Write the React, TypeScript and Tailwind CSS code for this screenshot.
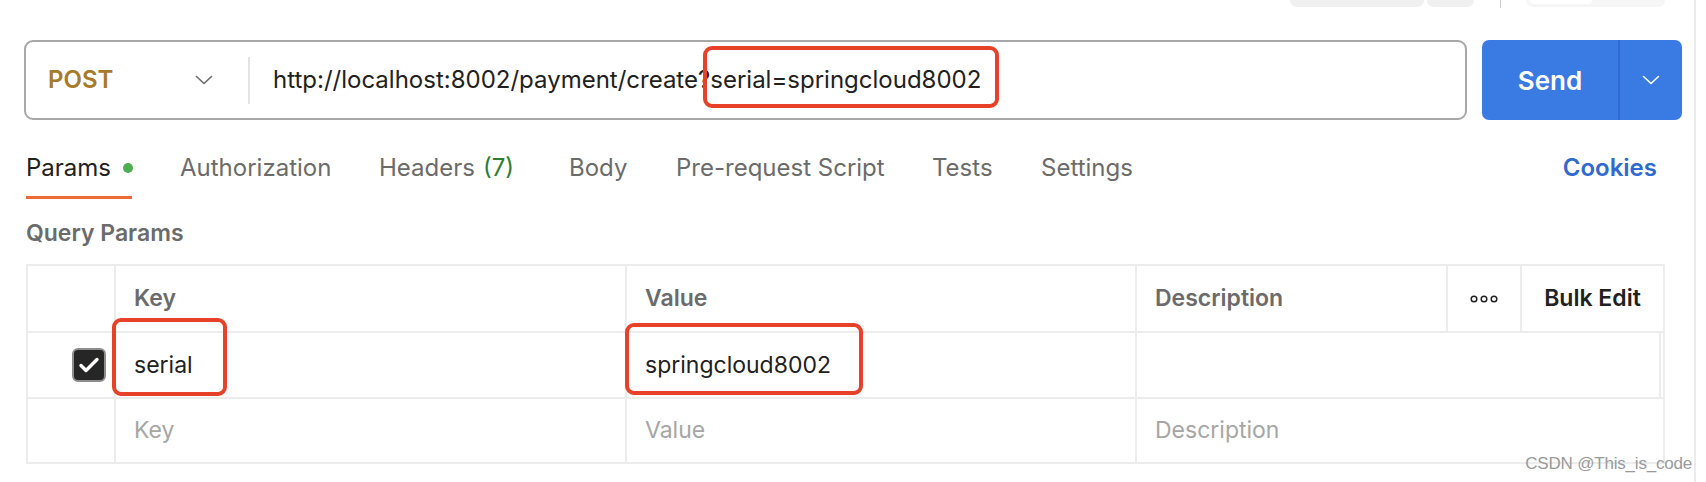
import { ReactNode } from "react";

function Chevron({ className }: { className?: string }) {
  return (
    <svg width="18" height="10" viewBox="0 0 18 10" className={className} fill="none">
      <polyline points="1.5,1.5 9,8.5 16.5,1.5" stroke="currentColor" strokeWidth="1.6" strokeLinecap="round" strokeLinejoin="round" />
    </svg>
  );
}

function Tab({ w, active, children }: { w: string; active?: boolean; children: ReactNode }) {
  return (
    <div className={`flex h-full shrink-0 flex-col ${w}`}>
      <div className={`mt-[33px] flex h-[30px] items-center text-[24px] leading-[30px] ${active ? "text-[#212121]" : "text-[#6b6b6b]"}`}>
        {children}
      </div>
      <div className="flex-1" />
      {active && <div className="h-[3px] w-[106px] bg-[#f0693b]" />}
    </div>
  );
}

function Check() {
  return (
    <div className="flex h-[34px] w-[34px] items-center justify-center rounded-[6px] border-2 border-[#8d8d8d] bg-[#262626]">
      <svg width="22" height="18" viewBox="0 0 22 18" fill="none">
        <polyline points="3,9.5 8,14.5 19,3.5" stroke="#fff" strokeWidth="3.4" strokeLinecap="round" strokeLinejoin="round" />
      </svg>
    </div>
  );
}

function Dots() {
  return (
    <svg width="28" height="8" viewBox="0 0 28 8" fill="none">
      <circle cx="4" cy="4" r="2.8" stroke="#212121" strokeWidth="1.5" />
      <circle cx="14" cy="4" r="2.8" stroke="#212121" strokeWidth="1.5" />
      <circle cx="24" cy="4" r="2.8" stroke="#212121" strokeWidth="1.5" />
    </svg>
  );
}

const cols = "grid grid-cols-[88px_511px_510px_311px_74px_141px]";

export default function App() {
  return (
    <div className="relative flex h-[482px] w-[1706px] overflow-hidden bg-white font-['Inter',sans-serif]">
      <div className="flex w-[1694px] flex-col pl-[24px]">
        {/* clipped toolbar above */}
        <div className="flex h-[7px] items-start pl-[1266px]">
          <div className="h-[7px] w-[134px] rounded-b-[8px] bg-[#f0f0f0]" />
          <div className="ml-[3px] h-[7px] w-[47px] rounded-b-[8px] bg-[#f0f0f0]" />
          <div className="ml-[26px] h-[8px] w-px bg-[#cfcfcf]" />
          <div className="ml-[25px] h-[7px] w-[139px] rounded-b-[8px] bg-[#f6f6f6] pl-[4px]">
            <div className="h-[4px] w-[62px] rounded-b-[6px] bg-white" />
          </div>
        </div>

        {/* request bar */}
        <div className="mt-[33px] flex h-[80px] items-stretch">
          <div className="flex w-[1443px] items-center rounded-[9px] border-2 border-[#a8a8a8]">
            <div className="flex w-[222px] items-center pl-[22px]">
              <span className="text-[24px] font-semibold text-[#a77a2c]">POST</span>
              <Chevron className="ml-[82px] text-[#6b6b6b]" />
            </div>
            <div className="h-[47px] w-[2px] bg-[#e3e3e3]" />
            <div className="pl-[23px] text-[24px] text-[#212121]">
              http://localhost:8002/payment/create?serial=springcloud8002
            </div>
          </div>
          <div className="ml-[15px] flex w-[200px] overflow-hidden rounded-[7px] bg-[#3a7be3]">
            <div className="flex w-[136px] items-center justify-center text-[26px] font-semibold text-white">Send</div>
            <div className="w-[2px] bg-[#2f6bd0]" />
            <div className="flex flex-1 items-center justify-center text-white">
              <Chevron />
            </div>
          </div>
        </div>

        {/* tabs */}
        <div className="ml-[2px] flex h-[79px] items-stretch">
          <Tab w="w-[154px]" active>
            Params
            <span className="ml-[12px] inline-block h-[10px] w-[10px] rounded-full bg-[#4caf50]" />
          </Tab>
          <Tab w="w-[199px]">Authorization</Tab>
          <Tab w="w-[190px]">
            Headers<span className="ml-[8px] text-[#2e7d32]">(7)</span>
          </Tab>
          <Tab w="w-[107px]">Body</Tab>
          <Tab w="w-[256px]">Pre-request Script</Tab>
          <Tab w="w-[109px]">Tests</Tab>
          <Tab w="w-[200px]">Settings</Tab>
          <div className="flex flex-1 justify-end pr-[37px]">
            <div className="mt-[33px] text-[24px] font-semibold leading-[30px] text-[#2f6ad0]">Cookies</div>
          </div>
        </div>

        <div className="ml-[2px] mt-[19px] text-[23px] font-semibold leading-[30px] text-[#6b6b6b]">Query Params</div>

        {/* table */}
        <div className="ml-[2px] mt-[16px] w-[1639px] border-2 border-[#ececec]">
          <div className={`${cols} h-[67px] border-b-2 border-[#ececec] text-[23px] font-semibold`}>
            <div className="border-r-2 border-[#ececec]" />
            <div className="flex items-center border-r-2 border-[#ececec] pl-[18px] text-[#6b6b6b]">Key</div>
            <div className="flex items-center border-r-2 border-[#ececec] pl-[18px] text-[#6b6b6b]">Value</div>
            <div className="flex items-center border-r-2 border-[#ececec] pl-[18px] text-[#6b6b6b]">Description</div>
            <div className="flex items-center justify-center border-r-2 border-[#ececec]"><Dots /></div>
            <div className="flex items-center justify-center text-[#212121]">Bulk Edit</div>
          </div>
          <div className={`${cols} h-[66px] border-b-2 border-[#ececec] text-[23px] text-[#212121]`}>
            <div className="flex items-center justify-end border-r-2 border-[#ececec] pr-[8px]"><Check /></div>
            <div className="flex items-center border-r-2 border-[#ececec] pl-[18px]">serial</div>
            <div className="flex items-center border-r-2 border-[#ececec] pl-[18px]">springcloud8002</div>
            <div className="col-span-3 flex pr-[2px]">
              <div className="flex-1 border-r-2 border-[#ececec]" />
            </div>
          </div>
          <div className={`${cols} h-[63px] text-[23px] text-[#a6a6a6]`}>
            <div className="border-r-2 border-[#ececec]" />
            <div className="flex items-center border-r-2 border-[#ececec] pl-[18px]">Key</div>
            <div className="flex items-center border-r-2 border-[#ececec] pl-[18px]">Value</div>
            <div className="col-span-3 flex items-center pl-[18px]">Description</div>
          </div>
        </div>
      </div>
      <div className="w-[2px] bg-[#ebebeb]" />

      {/* annotations */}
      <div className="pointer-events-none absolute left-[703px] top-[46px] h-[62px] w-[296px] rounded-[9px] border-[4px] border-[#e8412a]" />
      <div className="pointer-events-none absolute left-[112px] top-[318px] h-[78px] w-[115px] rounded-[9px] border-[4px] border-[#e8412a]" />
      <div className="pointer-events-none absolute left-[625px] top-[323px] h-[72px] w-[238px] rounded-[9px] border-[4px] border-[#e8412a]" />

      <div className="absolute right-[14px] top-[453px] whitespace-nowrap font-['Liberation_Sans',sans-serif] text-[17px] leading-[22px] tracking-[-0.2px] text-[#9a9a9a]">
        CSDN @This_is_code
      </div>
    </div>
  );
}
